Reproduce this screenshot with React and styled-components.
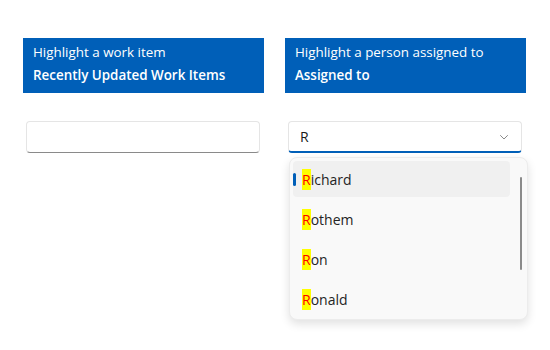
import React from 'react';
import styled, { createGlobalStyle } from 'styled-components';

const GlobalStyle = createGlobalStyle`
  body {
    margin: 0;
    background: #ffffff;
    font-family: "Segoe UI", "Open Sans", "Noto Sans", sans-serif;
  }
`;

const Page = styled.div`
  display: grid;
  grid-template-columns: 241px 241px;
  column-gap: 21px;
  padding: 38px 0 0 23px;
  width: 550px;
  height: 350px;
  box-sizing: border-box;
`;

const Column = styled.div`
  display: flex;
  flex-direction: column;
`;

const Banner = styled.div`
  background: #005fb8;
  color: #ffffff;
  height: 55px;
  box-sizing: border-box;
  padding: 4px 10px 0;
  display: flex;
  flex-direction: column;
  gap: 3px;
`;

const BannerLine = styled.div`
  font-size: 13.4px;
  line-height: 20px;
  font-weight: ${({ $bold }) => ($bold ? 600 : 400)};
  white-space: nowrap;
`;

const Field = styled.div`
  margin: 28px 4px 0 3px;
  height: 32px;
  box-sizing: border-box;
  background: #ffffff;
  border: 1px solid #e5e5e5;
  border-bottom: ${({ $focused }) => ($focused ? '2px solid #005fb8' : '1px solid #8a8a8a')};
  border-radius: 4px;
  display: flex;
  align-items: center;
  padding: 0 12px 0 11px;
  font-size: 14px;
  color: #1a1a1a;
`;

const FieldText = styled.span`
  flex: 1;
`;

const Chevron = styled.svg`
  width: 10px;
  height: 10px;
  color: #8a8a8a;
`;

const Menu = styled.div`
  margin: 4px 0 0 4px;
  width: 239px;
  height: 163px;
  box-sizing: border-box;
  background: #f9f9f9;
  border: 1px solid #ececec;
  border-radius: 8px;
  box-shadow: 0 4px 10px rgba(0, 0, 0, 0.12);
  padding: 3px 17px 0 3px;
  position: relative;
  display: flex;
  flex-direction: column;
  gap: 4px;
  overflow: hidden;
`;

const Option = styled.div`
  height: 36px;
  flex-shrink: 0;
  border-radius: 4px;
  background: ${({ $active }) => ($active ? '#f0f0f0' : 'transparent')};
  display: flex;
  align-items: center;
  padding-left: 9px;
  font-size: 14px;
  color: #242424;
  position: relative;
`;

const Indicator = styled.span`
  position: absolute;
  left: 0;
  top: 12px;
  width: 3px;
  height: 13px;
  border-radius: 2px;
  background: #005fb8;
`;

const Mark = styled.span`
  background: #ffff00;
  color: #ff0000;
  padding: 1px 0;
`;

const Scrollbar = styled.div`
  position: absolute;
  right: 5px;
  top: 19px;
  width: 2px;
  height: 93px;
  border-radius: 1px;
  background: #8a8a8a;
`;

const people = ['Richard', 'Rothem', 'Ron', 'Ronald'];

export default function App() {
  return (
    <>
      <GlobalStyle />
      <Page>
        <Column>
          <Banner>
            <BannerLine>Highlight a work item</BannerLine>
            <BannerLine $bold>Recently Updated Work Items</BannerLine>
          </Banner>
          <Field />
        </Column>
        <Column>
          <Banner>
            <BannerLine>Highlight a person assigned to</BannerLine>
            <BannerLine $bold>Assigned to</BannerLine>
          </Banner>
          <Field $focused>
            <FieldText>R</FieldText>
            <Chevron viewBox="0 0 10 10" fill="none">
              <path d="M1.5 3.5 L5 7 L8.5 3.5" stroke="currentColor" strokeWidth="1" strokeLinecap="round" strokeLinejoin="round" />
            </Chevron>
          </Field>
          <Menu>
            {people.map((name, i) => (
              <Option key={name} $active={i === 0}>
                {i === 0 && <Indicator />}
                <Mark>{name[0]}</Mark>
                {name.slice(1)}
              </Option>
            ))}
            <Scrollbar />
          </Menu>
        </Column>
      </Page>
    </>
  );
}
